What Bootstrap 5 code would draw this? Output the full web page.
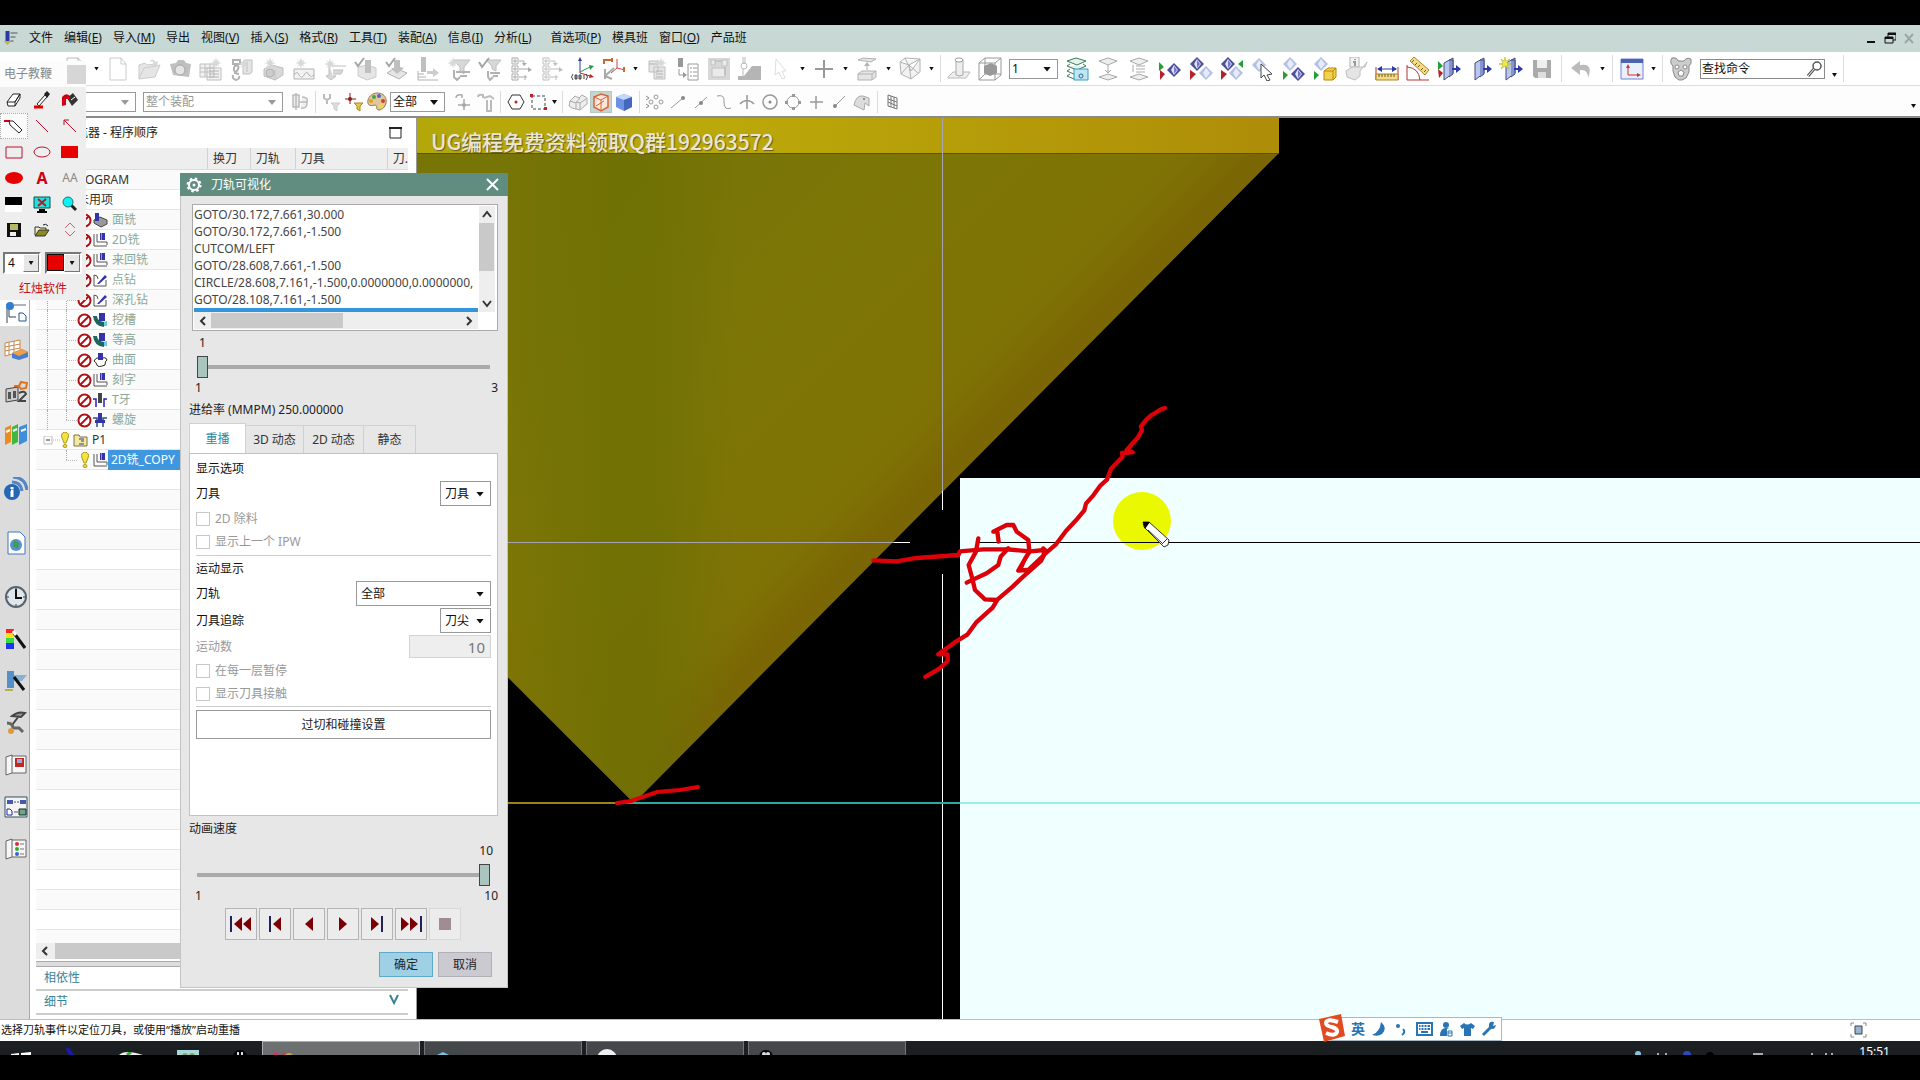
<!DOCTYPE html>
<html lang="zh-CN">
<head>
<meta charset="utf-8">
<meta name="viewport" content="width=device-width, initial-scale=1">
<title>刀轨可视化</title>
<link href="https://cdn.jsdelivr.net/npm/bootstrap@5.3.0/dist/css/bootstrap.min.css" rel="stylesheet">
<style>
body{background:#000;font:12px/16px "Noto Sans","Noto Sans CJK SC",sans-serif;color:#222;padding:25px 0;overflow:hidden}
svg{display:block;flex:none}
.btn{--bs-btn-padding-x:0;--bs-btn-padding-y:0;--bs-btn-font-size:12px;--bs-btn-border-radius:0;line-height:16px}
/* menus and toolbars */
.menubar{background:#c8d9d5;height:27px;gap:11px;padding:0 6px 2px 2px}
.menubar a{color:#111;text-decoration:none;white-space:nowrap}
.menubar .wide-gap{margin-left:8px}
.bar1{background:#fff;height:34px;gap:7px;padding-left:63px;border-bottom:1px solid #ddd}
.bar2{background:#fdfdfd;height:32px;gap:3px;padding:2px 0 0 10px;border-bottom:2px solid #8a8a8a}
.bar1 svg{width:24px;height:24px}
.bar2 svg{width:20px;height:20px}
.soft{opacity:.75}
.vsep{width:1px;align-self:stretch;background:#dcdcdc;margin:3px -1px}
.vsep.far{margin:3px 0}
.bar2 .vsep{margin:3px 2px}
.caret{width:5px;height:4px;background:#111;clip-path:polygon(0 0,100% 0,50% 100%);flex:none}
.on-tool{background:#c5d6d1;outline:1px solid #b4c8c2}
/* pull-down boxes */
.drop{position:relative;display:block;flex:none}
.drop::after{content:"";position:absolute;right:7px;top:50%;margin-top:-2px;width:8px;height:5px;background:#111;clip-path:polygon(0 0,100% 0,50% 100%);pointer-events:none}
.drop select{appearance:none;width:100%;height:25px;border:1px solid #999;background:#fff;padding:0 4px;font:inherit;color:#111;border-radius:0;display:block}
.drop.low select{height:20px;padding:0 2px}
.drop.dim::after{background:#999}.drop.dim select{color:#999;opacity:1}
.search-box{border:1px solid #8a8a8a;width:125px;height:20px}
.search-box input{border:0;outline:0;width:98px;padding:0 1px;font:inherit;color:#111}
.search-box input::placeholder{color:#111}
/* left side */
.side-icons{width:30px;background:#dcdcdc;border-right:1px solid #aaa;padding-top:181px}
.side-icons svg{width:24px;height:24px}
.side-icons .slot{height:42px;padding-left:4px;display:flex;align-items:center}
.side-icons .tab-on{height:27px;background:#fff;margin-bottom:4px}
.navi{width:387px;background:#fff;padding-left:6px;border-right:1px solid #999}
.navi-title{height:30px;padding:0 14px 0 4px}
.navi-head{height:22px;width:372px;background:#eee;color:#333;border-bottom:1px solid #ddd}
.navi-head span{border-left:1px solid #d2d2d2;padding-left:5px;line-height:21px}
.tree{width:372px;flex:1;min-height:0;overflow:hidden;margin:0;padding:0;list-style:none;background:repeating-linear-gradient(#fafafa 0 19px,#e6e6e6 19px 20px,#fff 20px 39px,#e6e6e6 39px 40px)}
.tree li{height:20px;display:flex;align-items:center;padding-left:11px;color:#8aa898}
.tree li.strong{color:#333}
.g1,.g2{width:19px;height:20px;border-left:1px dotted #aaa;flex:none}
.g2{width:11px;background:linear-gradient(90deg,#bbb 50%,transparent 0) 0 10px/2px 1px repeat-x}
.g2.end{border-left:0;position:relative}
.g2.end::before{content:"";position:absolute;height:10px;border-left:1px dotted #aaa}
.no-line{border-color:transparent}
.tree .picked{background:#3f97e0;color:#fff;align-self:stretch;padding:2px 3px;width:72px}
.tree .lbl{padding-left:4px}
.fold{height:24px;width:372px;border-bottom:2px solid #ccc;color:#3a8296;padding:3px 8px}
.thumb{background:#c9c9c9}
/* drawing palette */
.palette{left:0;top:61px;width:86px;height:239px;background:#eee;z-index:5}
.palette-title{height:26px;background:#fcfcfc;color:#888;padding-left:4px}
.palette-title i{width:19px;height:19px;background:#d6d6d6}
.palette-grid{display:grid;grid-template-columns:repeat(3,28px);grid-auto-rows:26px}
.palette-grid .btn{display:flex;align-items:center;justify-content:center}
.palette-grid .pressed{background:#fafafa;border:1px dotted #aaa}
.bevel{border:2px solid;border-color:#777 #fff #fff #777;background:#fff;height:22px}
.bevel b{width:16px;background:#e6e6e6;border:1px solid;border-color:#fff #777 #777 #fff}
.bevel select{appearance:none;border:0;background:none;width:18px;padding:0 3px;font:inherit;color:#111}
.swatch{width:17px;height:17px;background:#e60000;border:1px solid #111}
/* tool path dialog */
.dlg{left:180px;top:55px;width:328px;background:#e7e7e7;border:1px solid #c4c4c4;border-top:0;z-index:4}
.dlg-head{height:23px;background:#608d80;color:#fff;padding:0 9px 0 6px;margin:0 -1px}
.dlg-body{padding:8px 9px 10px 8px}
.codes{margin-left:3px;border:1px solid #aaa;background:#fff;padding:1px}
.codes ul{list-style:none;margin:0;padding:0;line-height:17px;white-space:nowrap;overflow:hidden;color:#444;border-bottom:4px solid #3494dc}
.codes .vbar{width:16px;background:#eee;height:106px;margin:0 1px 0 1px}
.codes .vbar .thumb{width:15px;height:48px}
.codes .hbar{height:17px;background:#eee;margin-right:18px}
.slide{appearance:none;display:block;width:293px;height:22px;margin:5px 0 2px 8px;background:linear-gradient(#aaa,#aaa) 0 50%/100% 4px no-repeat}
.slide::-webkit-slider-thumb{appearance:none;width:11px;height:22px;background:#a9c5bd;border:1px solid #444}
.ends{padding:0 0 0 6px}
.tabs .btn{height:28px;border:1px solid #d0d0d0;border-left:0;border-bottom:0;color:#333}
.tabs .btn.chosen{height:30px;background:#fff;color:#2a86a5;width:57px;border-left:1px solid #d0d0d0}
.panel{border:1px solid #c2c2c2;background:#fff;padding:7px 6px 76px;color:#111}
.panel hr{margin:5px 0;border-top:1px solid #ccc;opacity:1;color:#ccc}
.tick{display:flex;align-items:center;gap:5px;color:#999;height:16px}
.tick input{appearance:none;width:14px;height:14px;border:1px solid #c8c8c8;margin:0;background:#fff}
.count{width:82px;height:23px;background:#eee;border:1px solid #d2d2d2;text-align:right;padding:0 5px;color:#777;font-size:15px}
.wide-btn{width:100%;height:29px;border:1px solid #999!important;background:#fff;color:#222}
.play .btn{width:32px;height:32px;border:1px solid #b5b5b5;background:#ececec;display:flex;align-items:center;justify-content:center}
.ok,.cancel{width:54px;height:25px}
.dlg .ok{background:#9fd0e3;border:1px solid #5fa8c8}.dlg .cancel{background:#cacad0;border:1px solid #b0b0b6}
/* drawing area */
.scene{min-width:0;background:#000}
.scene svg{width:100%;height:100%}
.watermark{left:14px;top:9px;font:500 21px/28px "Noto Sans CJK SC",sans-serif;color:#e9e6d6;text-shadow:1px 1px 1px #665c20}
/* bottom */
.status{background:#fff;height:22px;border-top:1px solid #b5c0c0;color:#111;padding:0 53px 2px 1px}
.status .msg{font-size:11px}
.ime{left:1330px;bottom:0;width:172px;height:24px;background:#fff;border:1px solid #a9b7c5;padding-left:20px;gap:6px;color:#2874b4;z-index:3}
.ime svg.logo{position:absolute;left:-13px;top:-4px}
.task{height:14px;background:#1b1f22;overflow:hidden;align-items:flex-start!important}
.task .win{width:158px;height:30px;background:#44484b;border:1px solid #70767a;margin-right:4px;padding:12px 10px 0}
.task .win.front{background:#6c7070;border-color:#aab0b0}
.quick{width:262px;gap:34px;padding:11px 0 0 11px}
.clock{color:#fff;padding:3px 30px 0 0}
</style>
<script src="https://cdn.jsdelivr.net/npm/bootstrap@5.3.0/dist/js/bootstrap.bundle.min.js"></script>
</head>
<body class="d-flex flex-column vh-100 m-0">

<svg width="0" height="0" class="position-absolute" aria-hidden="true">
<defs>
<g id="star"><path d="M6 0l1 4 3-2-2 3 4 1-4 1 2 3-3-2-1 4-1-4-3 2 2-3-4-1 4-1-2-3 3 2z" fill="#ccc"/></g>
<g id="dia"><path d="M7 0l7 7-7 7-7-7z" fill="#4b4f9c"/><path d="M7 2l4 5-4 5-3-5z" fill="#dfe3fa"/><path d="M7 3v8l3-4z" fill="#7479c4"/></g>
<g id="dial"><path d="M7 0l7 7-7 7-7-7z" fill="#b4c0e4"/><path d="M7 2l4 5-4 5-3-5z" fill="#e6ecfc"/></g>
<symbol id="new" viewBox="0 0 24 24"><path d="M4 1h11l5 6v16H4zM15 1v6h5" fill="#fff" stroke="#bbb"/></symbol>
<symbol id="open" viewBox="0 0 24 24"><path d="M2 22V8l6-2 2 2 8-1v3M2 22l5-11 16-3-5 12z" fill="#ddd" stroke="#bbb"/><path d="M12 5q3-5 7 0l2-1-1 5-5-2 2-1q-2-3-5-1" fill="#ccc"/></symbol>
<symbol id="cam" viewBox="0 0 24 24"><path d="M2 7l6-1 2-3h6l2 3 5 1-2 13-16-2z" fill="#aaa"/><circle cx="12" cy="13" r="5" fill="#ddd" stroke="#888"/></symbol>
<symbol id="grid" viewBox="0 0 24 24"><path d="M1 7h14v13H1zM1 11h14M1 15h14M6 7v13M11 7v13M8 11h14v12H8z" fill="#eee" stroke="#aaa"/><path d="M10 14h10M10 17h10M10 20h10" stroke="#999"/><use href="#star" x="11"/></symbol>
<symbol id="tool" viewBox="0 0 24 24"><path d="M3 3h7v4H3zM4 8q6 0 4 4t-4 4M8 8q-5 1-4 5t5 4M3 18q-1 4 3 5 4-1 3-4" fill="none" stroke="#999" stroke-width="2"/><path d="M13 5l2-2h7v12l-2 2h-7zM17 5v10" fill="#ddd" stroke="#aaa"/><use href="#star" x="8" y="1"/></symbol>
<symbol id="box" viewBox="0 0 24 24"><path d="M3 12l8-4 11 3v7l-8 5-11-4z" fill="#ccc" stroke="#aaa"/><circle cx="9" cy="16" r="4" fill="#bbb" stroke="#999"/><path d="M14 13v10" stroke="#aaa"/><use href="#star" x="3"/></symbol>
<symbol id="wave" viewBox="0 0 24 24"><path d="M2 12h20v10H2zM2 18q3-5 5 0 3 4 5 0 3-5 5 0 2 3 5 0" fill="#eee" stroke="#999"/><use href="#star" x="3"/></symbol>
<symbol id="feed" viewBox="0 0 24 24"><path d="M9 9h14M10 13h10l-2 4H10M6 8v10l-3 1 5 4 5-4h-3" fill="#ccc" stroke="#aaa"/><use href="#star" x="1" y="1"/></symbol>
<symbol id="ver" viewBox="0 0 24 24"><path d="M4 10l9-2 9 3v9l-9 3-9-4z" fill="#ddd" stroke="#bbb"/><path d="M11 3h6v13h-6z" fill="#aaa"/><path d="M1 5l3 4 6-8" stroke="#888" fill="none" stroke-width="2"/></symbol>
<symbol id="ver2" viewBox="0 0 24 24"><path d="M2 16l8-5 12 5-8 6z" fill="#ddd" stroke="#999"/><path d="M9 3h6v7l4 1-7 6-6-6h3z" fill="#aaa"/><path d="M1 5l3 4 6-8" stroke="#888" fill="none" stroke-width="2"/></symbol>
<symbol id="post" viewBox="0 0 24 24"><path d="M5 0h5v15H5z" fill="#aaa"/><path d="M2 17h6M2 14v9h20M2 20h8" stroke="#999" fill="none"/><path d="M11 14h6v-3l6 5-6 4v-3h-6z" fill="#bbb"/></symbol>
<symbol id="fil" viewBox="0 0 24 24"><path d="M6 3h17l-6 7v7l-4-3v-4z" fill="#ccc" stroke="#aaa"/><path d="M7 13v7l3 3 3-3M9 15h14M13 19h7" fill="none" stroke="#999" stroke-width="2"/><use href="#star"/></symbol>
<symbol id="filc" viewBox="0 0 24 24"><path d="M8 3h15l-5 6v5l-4-2V9z" fill="#ccc" stroke="#aaa"/><path d="M10 14v6l2 3 3-3M12 16h10M15 19h5" fill="none" stroke="#999" stroke-width="2"/><path d="M1 5l3 5 7-9" stroke="#888" fill="none" stroke-width="2"/></symbol>
<symbol id="exp" viewBox="0 0 24 24"><path d="M3 1h6v6H3zM3 9h6v6H3zM3 17h6v6H3zM4 4h4M4 12h4M4 20h4M6 2v4M6 10v4M6 18v4M10 4h5v3M10 12h9M10 20h8M16 18v5" fill="none" stroke="#aaa"/><path d="M13 6h5l-3 3zM19 10l4 3-4 2z" fill="#aaa"/></symbol>
<symbol id="csys" viewBox="0 0 24 24"><path d="M9 16V3" stroke="#333c9c"/><path d="M7 4h4L9 0z" fill="#333c9c"/><path d="M9 15l10-5" stroke="#2a9a40"/><path d="M18 8l5 1-4 4z" fill="#2a9a40"/><path d="M9 16l10 3" stroke="#b22"/><path d="M19 17l4 3-5 1z" fill="#b22"/><path d="M2 17q-3 3 0 6M5 18v4M9 18v4M13 18v4M15 17q3 3 0 6M4 18h2v4H4zM8 18h2v4H8z" stroke="#444" fill="none"/></symbol>
<symbol id="csys2" viewBox="0 0 24 24"><path d="M3 22V12M3 19l7 3M3 19l9-8" stroke="#aaa" fill="none" stroke-width="2"/><path d="M15 11V2M15 11l8 2M15 11l-6 5" stroke="#c44"/><path d="M2 7V3h8M10 1v4M22 10v5" stroke="#c63" fill="none" stroke-width="2"/></symbol>
<symbol id="pages" viewBox="0 0 24 24"><path d="M4 4h9v11H4zM9 10h11v12H9z" fill="#ddd" stroke="#aaa"/><path d="M11 14h7M11 17h7M11 20h7M4 7h8" stroke="#999"/><use href="#star" x="10"/></symbol>
<symbol id="list" viewBox="0 0 24 24"><path d="M2 1h5v9H2z" fill="#999"/><path d="M3 12v6h5M12 7h10v16H12zM14 11h2M17 11h4M14 15h2M17 15h4M14 19h2M17 19h4" fill="none" stroke="#999"/><path d="M7 15l4 3-4 3z" fill="#999"/></symbol>
<symbol id="shop" viewBox="0 0 24 24"><path d="M1 1h22v22H1z" fill="#ccc"/><path d="M4 3h4v5H4zM15 3h5v6h-5zM5 11h13v9H5z" fill="#e4e4e4" stroke="#aaa"/><path d="M8 4h7M18 10v8" stroke="#999"/></symbol>
<symbol id="ramp" viewBox="0 0 24 24"><path d="M0 23V19h6L14 9h9v14z" fill="#b5b5b5"/><circle cx="6" cy="9" r="3" fill="#fff" stroke="#bbb"/><path d="M5 0v6h2V0M5 12v8" stroke="#bbb" fill="none"/></symbol>
<symbol id="ptr" viewBox="0 0 24 24"><path d="M7 2l10 12h-4l3 7-3 1-3-7-4 3z" fill="#fff" stroke="#ddd"/></symbol>
<symbol id="plus" viewBox="0 0 24 24"><path d="M12 3v18M3 12h18" stroke="#999" stroke-width="2"/></symbol>
<symbol id="ext" viewBox="0 0 24 24"><path d="M3 3l5-2 13 1-5 3zM3 17l4-3h14v6l-4 3H3zM3 17h14v6M17 17l4-3M12 13V7" fill="#ddd" stroke="#999"/><path d="M9 9h6l-3-4z" fill="#999"/></symbol>
<symbol id="wire" viewBox="0 0 24 24"><path d="M2 5l9 3 11-6v13l-9 7-10-5zM11 8l2 14M2 5l5-4 15 1M7 1l6 13 9-12M3 17l8-9 9 8" fill="#eee" stroke="#999"/></symbol>
<symbol id="pole" viewBox="0 0 24 24"><path d="M1 20l5-5h17l-4 6H1z" fill="#eee" stroke="#bbb"/><path d="M9 3v15q3 2 7 0V3" fill="#eee" stroke="#aaa"/><ellipse cx="12" cy="3" rx="4" ry="2" fill="#fff" stroke="#999"/></symbol>
<symbol id="cubein" viewBox="0 0 24 24"><path d="M1 6l6-5h16v17l-6 5H1zM1 6h16v17M17 6l6-5M7 1v16h16M7 17l-6 6" fill="none" stroke="#999"/><path d="M6 9l7-3 6 3v7l-7 3-6-3z" fill="#999"/></symbol>
<symbol id="lay" viewBox="0 0 24 24"><path d="M2 4l9-3 10 3-9 4zM2 9l10 4 9-4M2 14l9 4M2 19l7 3M2 9l3-2M21 9l-3-2M2 14l3-2M2 19l3-2" fill="#e4f2ea" stroke="#3d7a5c"/><path d="M9 12h14v11H9z" fill="#bfe6f5" stroke="#3a9cc0"/><circle cx="16" cy="19" r="2" fill="none" stroke="#2a6a90"/></symbol>
<symbol id="laym" viewBox="0 0 24 24"><path d="M3 4l9-3 9 3-9 4zM3 20l9-3 9 3-9 3zM12 8v8M9 13l3 3 3-3" fill="#eee" stroke="#aaa"/></symbol>
<symbol id="layc" viewBox="0 0 24 24"><path d="M3 4l9-3 9 3-9 4zM3 20l9-3 9 3-9 3z" fill="#eee" stroke="#aaa"/><path d="M9 9h9M9 12h9M9 15h9M6 8v7" stroke="#aaa"/></symbol>
<symbol id="d1" viewBox="0 0 24 24"><path d="M1 5l5 5-5 4z" fill="#22a033"/><path d="M2 13l5 4-5 6z" fill="#b8202a"/><use href="#dia" x="9" y="6"/></symbol>
<symbol id="d2" viewBox="0 0 24 24"><use href="#dia" x="1" y="0"/><path d="M1 13l6 4-6 6z" fill="#b8202a"/><use href="#dial" x="10" y="9"/></symbol>
<symbol id="d3" viewBox="0 0 24 24"><use href="#dia" x="1" y="0"/><path d="M1 13l6 4-6 6z" fill="#b8202a"/><path d="M23 3v8l-5-4z" fill="#22a033"/><use href="#dial" x="9" y="9"/></symbol>
<symbol id="d4" viewBox="0 0 24 24"><use href="#dial" x="1" y="1"/><path d="M10 7l11 10-5 1 3 5-3 1-3-6-3 3z" fill="#fff" stroke="#444"/></symbol>
<symbol id="d5" viewBox="0 0 24 24"><use href="#dial" x="1" y="0"/><path d="M1 14l5 4-5 5z" fill="#22a033"/><use href="#dia" x="9" y="10"/></symbol>
<symbol id="d6" viewBox="0 0 24 24"><use href="#dial" x="1" y="0"/><path d="M1 14l5 4-5 5z" fill="#22a033"/><path d="M11 14l4-3h8v9l-3 3h-9zM11 14h9v9M20 14l3-3" fill="#f2d24c" stroke="#b8860b"/></symbol>
<symbol id="info" viewBox="0 0 24 24"><path d="M6 0h9v10H6z" fill="#eee" stroke="#999"/><path d="M11 2v1M9 5h2v4" stroke="#777" fill="none" stroke-width="2"/><path d="M2 14l6-4h13l2-5-7 9v5l-5 4-8-3z" fill="#ddd" stroke="#aaa"/></symbol>
<symbol id="rule" viewBox="0 0 24 24"><path d="M1 10v13M23 10v13" stroke="#b33"/><path d="M3 12h18" stroke="#2b3aa8"/><path d="M2 12l5-3v6zM22 12l-5-3v6z" fill="#2b3aa8"/><path d="M1 17h22v6H1z" fill="#f2dc8c" stroke="#a8852a"/><path d="M4 17v3M7 17v3M10 17v3M13 17v3M16 17v3M19 17v3" stroke="#775a10"/></symbol>
<symbol id="ang" viewBox="0 0 24 24"><path d="M1 8v15h22M1 10q12 1 13 13" fill="none" stroke="#b33"/><path d="M4 4l4-4 15 13-4 5z" fill="#f2dc8c" stroke="#a8852a"/><path d="M8 3l-2 2M11 6l-2 2M14 8l-2 2M17 11l-2 2M20 13l-2 2" stroke="#775a10"/></symbol>
<g id="plate"><path d="M7 6l9-5v15l-9 7z" fill="#b9c7ee" stroke="#454d7a"/><path d="M12 3h4v14l-4 3" fill="#8695d2" stroke="#454d7a"/><path d="M15 12h6" stroke="#2b3aa8" stroke-width="2"/><path d="M19 8l5 4-5 4z" fill="#2b3aa8"/></g>
<symbol id="pl1" viewBox="0 0 24 24"><path d="M1 4l5 5-5 4z" fill="#22a033"/><path d="M1 12l5 4-4 5z" fill="#b8202a"/><use href="#plate"/></symbol>
<symbol id="pl2" viewBox="0 0 24 24"><use href="#plate"/></symbol>
<symbol id="pl3" viewBox="0 0 24 24"><use href="#plate"/><path d="M6 0l1 4 4-2-3 4 4 1-4 1 2 4-4-3-4 3 2-4-4-1 4-1-2-4 3 2z" fill="#e6ea4c" stroke="#a8a020" stroke-width=".5"/></symbol>
<symbol id="save" viewBox="0 0 24 24"><path d="M3 3h18v18H5l-2-2z" fill="#aaa"/><path d="M7 3h10v8H7z" fill="#eee"/><path d="M8 15h8v6H8z" fill="#ddd"/></symbol>
<symbol id="undo" viewBox="0 0 24 24"><path d="M2 11l9-7v4q14-2 8 13 0-9-8-8v5z" fill="#bbb"/></symbol>
<symbol id="orient" viewBox="0 0 24 24"><path d="M1 2h22v20H1z" fill="#e9f0fb" stroke="#6f82cf"/><path d="M1 2h22v4H1z" fill="#4c62b4"/><path d="M8 18V9M8 18h10" stroke="#c33" fill="none"/><path d="M6 11h4L8 7zM17 16l4 2-4 2z" fill="#c33"/></symbol>
<symbol id="bear" viewBox="0 0 24 24"><path d="M3 1q5-1 6 3h6q2-4 7-2 1 5-2 7v6l-3 6-4 2h-3l-4-3-2-6V9Q0 5 3 1z" fill="#ccc" stroke="#888"/><circle cx="8" cy="10" r="2" fill="#fff" stroke="#888"/><circle cx="16" cy="10" r="2" fill="#fff" stroke="#888"/><path d="M9 15l3-2 3 2-1 4h-4z" fill="#fff" stroke="#888"/></symbol>
<symbol id="sm1" viewBox="0 0 20 20"><path d="M3 3h6v12H3zM6 1v17M12 5q7 0 5 6 0 6-6 5M9 10h8" fill="#eee" stroke="#bbb" stroke-width="1.500"/></symbol>
<symbol id="sm2" viewBox="0 0 20 20"><path d="M3 2v4l3 2 3-2V2M6 8v4" fill="none" stroke="#bbb" stroke-width="2"/><path d="M10 11h9l-3 3v5l-3-2v-3z" fill="#ddd" stroke="#ccc"/></symbol>
<symbol id="sm3" viewBox="0 0 20 20"><path d="M6 1v11M1 7h11" stroke="#8b1a1a"/><circle cx="6" cy="7" r="2" fill="#8b1a1a"/><path d="M10 11h9l-3 3v5l-3-2v-3z" fill="#e8c840" stroke="#a8882a"/></symbol>
<symbol id="pal" viewBox="0 0 20 20"><path d="M10 1c13 0 11 16 2 17-4 0-1-5-4-5-6 2-8-1-7-5 1-4 5-7 9-7z" fill="#e0c89a" stroke="#987a4a"/><circle cx="7" cy="5" r="2" fill="#48a048"/><circle cx="12" cy="4" r="2" fill="#4a6ad0"/><circle cx="16" cy="9" r="2" fill="#d04040"/><circle cx="4" cy="9" r="2" fill="#e0a030"/><circle cx="14" cy="14" r="2" fill="#e8e040"/></symbol>
<symbol id="sm4" viewBox="0 0 20 20"><path d="M4 6q0-4 6-3v3M12 7v11M6 13h12" fill="none" stroke="#aaa" stroke-width="1.500"/><circle cx="12" cy="13" r="2" fill="#aaa"/></symbol>
<symbol id="sm5" viewBox="0 0 20 20"><path d="M3 5q0-3 5-2v3M9 6l6-2 4 3M12 8v11h4V8" fill="none" stroke="#bbb" stroke-width="2"/></symbol>
<symbol id="hex" viewBox="0 0 20 20"><path d="M6 3h8l4 7-4 7H6l-4-7z" fill="#fff" stroke="#333"/><circle cx="10" cy="10" r="1.500" fill="#b22"/></symbol>
<symbol id="marq" viewBox="0 0 20 20"><path d="M3 4h13v13H3z" fill="none" stroke="#444" stroke-dasharray="3 2"/><path d="M1 2h3v3H1zM15 15h3v3h-3z" fill="#b22"/></symbol>
<symbol id="cub1" viewBox="0 0 20 20"><path d="M2 9l5-5 4 2 3-3 5 3v6l-7 6-8-2-3-2zM2 9l6 2v6M8 11l4-5M12 18v-7l6-4M12 11l-4-1" fill="#eee" stroke="#aaa"/></symbol>
<symbol id="cub2" viewBox="0 0 20 20"><path d="M3 5l7-3 7 2v11l-7 4-7-4z" fill="#fde9dc" stroke="#d9643a" stroke-width="1.500"/><path d="M3 5l7 3 7-4M10 8v11M5 14l8-5" fill="none" stroke="#d9643a"/></symbol>
<symbol id="cub3" viewBox="0 0 20 20"><path d="M2 5l8-3 8 3v10l-8 4-8-4z" fill="#6d92e4"/><path d="M2 5l8-3 8 3-8 3z" fill="#c4d7fa"/><path d="M10 8l8-3v10l-8 4z" fill="#4468c0"/></symbol>
<symbol id="snap" viewBox="0 0 20 20"><g fill="none" stroke="#999"><circle cx="11" cy="5" r="2"/><circle cx="11" cy="15" r="2"/><circle cx="6" cy="10" r="2"/><circle cx="16" cy="10" r="2"/></g><path d="M1 4l3 2-3 2M1 12l3 2-3 2" fill="none" stroke="#888"/></symbol>
<symbol id="s1" viewBox="0 0 20 20"><path d="M3 16L15 6" stroke="#999"/><circle cx="15" cy="6" r="2" fill="#888"/></symbol>
<symbol id="s2" viewBox="0 0 20 20"><path d="M4 16L16 5" stroke="#999"/><circle cx="10" cy="11" r="2" fill="#888"/></symbol>
<symbol id="s3" viewBox="0 0 20 20"><path d="M3 4q8-2 7 6 0 9 7 6" fill="none" stroke="#999"/></symbol>
<symbol id="s4" viewBox="0 0 20 20"><path d="M3 12q7-7 14 0M10 3v14" fill="none" stroke="#999" stroke-width="1.500"/></symbol>
<symbol id="s5" viewBox="0 0 20 20"><circle cx="10" cy="10" r="7" fill="none" stroke="#999" stroke-width="1.500"/><circle cx="10" cy="10" r="1.500" fill="#888"/></symbol>
<symbol id="s6" viewBox="0 0 20 20"><circle cx="10" cy="10" r="6" fill="none" stroke="#999"/><path d="M9 2h3v3H9zM9 15h3v3H9zM2 9h3v3H2zM15 9h3v3h-3z" fill="#999"/></symbol>
<symbol id="s7" viewBox="0 0 20 20"><path d="M10 4v13M4 10h13" stroke="#999" stroke-width="1.500"/></symbol>
<symbol id="s8" viewBox="0 0 20 20"><path d="M5 15L16 4" stroke="#999"/><circle cx="6" cy="14" r="2" fill="#888"/></symbol>
<symbol id="s9" viewBox="0 0 20 20"><path d="M2 13q2-10 9-9l6 2v8l-4-3-1 7z" fill="#ddd" stroke="#aaa"/><circle cx="12" cy="7" r="1" fill="#777"/></symbol>
<symbol id="s10" viewBox="0 0 20 20"><path d="M5 3l9 3v11l-9-3zM8 4v11M11 5v11M5 7l9 3M5 10l9 4" fill="none" stroke="#777"/></symbol>
<symbol id="ban" viewBox="0 0 15 15"><circle cx="7.500" cy="7.500" r="6" fill="#fff" stroke="#b20f14" stroke-width="2"/><path d="M3 12l9-9" stroke="#b20f14" stroke-width="2"/></symbol>
<symbol id="op" viewBox="0 0 16 16"><path d="M2 2v12h13M5 2v8h10v3" fill="none" stroke="#555"/><path d="M8 1h5v7H8z" fill="#3434a8"/><path d="M9 1h1v7H9z" fill="#8c8ce0"/></symbol>
<symbol id="opface" viewBox="0 0 16 16"><path d="M2 8l6-3 7 3v4l-6 3-7-4z" fill="#999" stroke="#444"/><path d="M3 1h4v8H3z" fill="#3434a8"/></symbol>
<symbol id="opdr" viewBox="0 0 16 16"><path d="M2 3v11h12V8M2 3q4 0 4 4" fill="none" stroke="#555"/><path d="M5 12l8-9 2 2-8 7z" fill="#3434a8"/></symbol>
<symbol id="oppock" viewBox="0 0 16 16"><path d="M1 4q1 10 11 11V10Q5 9 5 4z" fill="#1e6660"/><path d="M7 1h6v8H7z" fill="#3434a8"/><path d="M12 10l3-1v5h-3z" fill="#60d0e0"/></symbol>
<symbol id="oparea" viewBox="0 0 16 16"><path d="M2 9q3-5 6-2 6-3 7 1-2 1-2 5-7 3-8 0-1-3-3-4z" fill="#fff" stroke="#222"/><path d="M6 1h5v7H6z" fill="#3434a8"/></symbol>
<symbol id="opth" viewBox="0 0 16 16"><path d="M1 7h3v8M15 7h-3v8" fill="none" stroke="#2020c0" stroke-width="1.500"/><path d="M6 1h4v10H6z" fill="#444"/></symbol>
<symbol id="opsp" viewBox="0 0 16 16"><path d="M1 6h4v9M15 6h-4v9" fill="none" stroke="#257" stroke-width="1.500"/><path d="M6 1h4v7H6zM3 8h10v3H3z" fill="#3434a8"/></symbol>
<symbol id="bulb" viewBox="0 0 8 16"><path d="M4 0q5 1 3 6L5 11H3L1 6Q-1 1 4 0z" fill="#f4e33a" stroke="#a89a20"/><ellipse cx="4" cy="14" rx="2" ry="1.500" fill="#f4e33a" stroke="#a89a20"/></symbol>
</defs>
</svg>

<nav class="menubar d-flex align-items-center flex-shrink-0">
<svg width="16" height="16" viewBox="0 0 15 16"><path d="M3 1h4v10H3z" fill="#2a3aa0"/><path d="M1 11h8l-4 4z" fill="#c7b23c"/><path d="M8 3h7M8 7h5M8 11h3" stroke="#555"/></svg>
<a href="#">文件</a><a href="#">编辑(<u>E</u>)</a><a href="#">导入(<u>M</u>)</a><a href="#">导出</a><a href="#">视图(<u>V</u>)</a><a href="#">插入(<u>S</u>)</a><a href="#">格式(<u>R</u>)</a><a href="#">工具(<u>T</u>)</a><a href="#">装配(<u>A</u>)</a><a href="#">信息(<u>I</u>)</a><a href="#">分析(<u>L</u>)</a><a href="#" class="wide-gap">首选项(<u>P</u>)</a><a href="#">模具班</a><a href="#">窗口(<u>O</u>)</a><a href="#">产品班</a>
<div class="ms-auto d-flex gap-2 align-items-center">
<button class="btn border-0" aria-label="最小化"><svg width="10" height="12"><path d="M1 10h8" stroke="#111" stroke-width="2"/></svg></button>
<button class="btn border-0" aria-label="还原"><svg width="12" height="12" fill="none" stroke="#111"><path d="M4 5V1h8v7H9" /><path d="M4 2h8M1 6h8" stroke-width="2"/><path d="M1 5h8v6H1z"/></svg></button>
<button class="btn border-0" aria-label="关闭"><svg width="10" height="12"><path d="M1 2l8 9M9 2l-8 9" stroke="#9aa8a4" stroke-width="2"/></svg></button>
</div>
</nav>

<div class="bar1 d-flex align-items-center flex-shrink-0">
<svg><use href="#new"/></svg><i class="caret"></i>
<svg class="soft"><use href="#new"/></svg><svg class="soft"><use href="#open"/></svg><svg class="soft"><use href="#cam"/></svg><svg class="soft"><use href="#grid"/></svg><svg class="soft"><use href="#tool"/></svg><svg class="soft"><use href="#box"/></svg><svg class="soft"><use href="#wave"/></svg><svg class="soft"><use href="#feed"/></svg><svg class="soft"><use href="#ver"/></svg><svg class="soft"><use href="#ver2"/></svg><svg class="soft"><use href="#post"/></svg><svg class="soft"><use href="#fil"/></svg><svg class="soft"><use href="#filc"/></svg><svg><use href="#exp"/></svg><svg class="soft"><use href="#exp"/></svg><svg><use href="#csys"/></svg><svg><use href="#csys2"/></svg><i class="caret"></i>
<svg class="soft"><use href="#pages"/></svg><svg><use href="#list"/></svg><svg class="soft"><use href="#shop"/></svg><svg><use href="#ramp"/></svg><svg><use href="#ptr"/></svg><i class="caret"></i>
<svg><use href="#plus"/></svg><i class="caret"></i><svg class="soft"><use href="#ext"/></svg><i class="caret"></i><svg class="soft"><use href="#wire"/></svg><i class="caret"></i>
<i class="vsep"></i><svg><use href="#pole"/></svg><svg><use href="#cubein"/></svg>
<span class="drop low" style="width:49px"><select aria-label="工作层"><option>1</option></select></span>
<svg><use href="#lay"/></svg><svg><use href="#laym"/></svg><svg><use href="#layc"/></svg><svg><use href="#d1"/></svg><svg><use href="#d2"/></svg><svg><use href="#d3"/></svg><svg><use href="#d4"/></svg><svg><use href="#d5"/></svg><svg><use href="#d6"/></svg><svg class="soft"><use href="#info"/></svg><svg><use href="#rule"/></svg><svg><use href="#ang"/></svg><svg><use href="#pl1"/></svg><svg><use href="#pl2"/></svg><svg><use href="#pl3"/></svg><svg><use href="#save"/></svg>
<i class="vsep far"></i><svg><use href="#undo"/></svg><i class="caret"></i><i class="vsep far"></i><svg><use href="#orient"/></svg><i class="caret"></i><i class="vsep"></i><svg><use href="#bear"/></svg>
<div class="search-box d-flex align-items-center justify-content-between"><input type="text" aria-label="查找命令" placeholder="查找命令"><svg style="width:18px;height:18px" viewBox="0 0 18 18"><circle cx="11" cy="6" r="4" fill="#fff" stroke="#555" stroke-width="1.500"/><path d="M8 9l-6 7" stroke="#555" stroke-width="3"/><path d="M8 9l-6 7" stroke="#fff"/></svg></div>
<i class="caret align-self-end mb-2"></i><i class="vsep"></i>
</div>

<div class="bar2 d-flex align-items-center flex-shrink-0">
<span class="drop low dim" style="width:126px"><select aria-label="类型过滤器" disabled><option></option></select></span>
<span class="drop low dim ms-1" style="width:140px"><select aria-label="选择范围" disabled><option>整个装配</option></select></span>
<svg class="ms-1"><use href="#sm1"/></svg><i class="vsep"></i><svg><use href="#sm2"/></svg><svg><use href="#sm3"/></svg><svg><use href="#pal"/></svg>
<span class="drop low" style="width:55px"><select aria-label="过滤"><option>全部</option></select></span>
<svg class="ms-1"><use href="#sm4"/></svg><svg><use href="#sm5"/></svg><i class="vsep"></i><svg><use href="#hex"/></svg><svg><use href="#marq"/></svg><i class="caret"></i><i class="vsep"></i>
<svg><use href="#cub1"/></svg><svg class="on-tool"><use href="#cub2"/></svg><svg><use href="#cub3"/></svg><i class="vsep"></i>
<svg><use href="#snap"/></svg><svg><use href="#s1"/></svg><svg><use href="#s2"/></svg><svg><use href="#s3"/></svg><svg><use href="#s4"/></svg><svg><use href="#s5"/></svg><svg><use href="#s6"/></svg><svg><use href="#s7"/></svg><svg><use href="#s8"/></svg><svg><use href="#s9"/></svg><i class="vsep"></i><svg><use href="#s10"/></svg>
<i class="caret ms-auto me-1 align-self-end mb-2"></i>
</div>

<main class="d-flex flex-grow-1 position-relative" style="min-height:0">
<aside class="side-icons flex-shrink-0">
<div class="slot tab-on"><svg viewBox="0 0 24 24"><path d="M3 3v19M5 8v8h7" stroke="#345" fill="none"/><circle cx="6" cy="5" r="4" fill="#2f7fd0"/><path d="M10 4h12" stroke="#667"/><path d="M15 12h4l3 3v5h-7z" fill="#fff" stroke="#258"/></svg></div>
<div class="slot"><svg viewBox="0 0 24 24"><path d="M1 4l15-3v12L1 17zM1 8l15-3M1 12l15-3M5 3v13M10 2v13" fill="#fff" stroke="#c8884a"/><path d="M8 14l10-4 6 3v5l-9 3-7-2z" fill="#4a7cd0"/><path d="M8 14l10-4 6 3-9 4z" fill="#f0a040"/></svg></div>
<div class="slot"><svg viewBox="0 0 24 24"><path d="M2 8l12-2v13L2 21z" fill="#ccc" stroke="#444"/><path d="M4 11h3v7H4zM9 10h3v7H9z" fill="#555"/><path d="M10 5h5l2-4 6 1-1 5-5 1-2-3" fill="none" stroke="#e07020" stroke-width="2"/><path d="M15 12q6-3 7 1l-7 7h7" stroke="#444" fill="none" stroke-width="2"/></svg></div>
<div class="slot"><svg viewBox="0 0 24 24"><path d="M1 5l6-3v17l-6 3z" fill="#ee8a22"/><path d="M8 4l6-3v18l-6 3z" fill="#40b840"/><path d="M15 4l8-3v17l-8 4z" fill="#3c8fd8"/><path d="M2 9l4-2M9 8l4-2M17 8l5-2" stroke="#fff" stroke-width="2"/></svg></div>
<div class="slot" style="height:66px"><svg viewBox="0 0 24 24"><circle cx="8" cy="15" r="8" fill="#2467b4"/><path d="M8 10v2M7 14h1v6" stroke="#fff" stroke-width="3"/><path d="M8 5q9 0 10 9M9 0q13 1 14 13" fill="none" stroke="#5585c4" stroke-width="3"/></svg></div>
<div class="slot"><svg viewBox="0 0 24 24"><path d="M4 1h12l5 5v17H4z" fill="#fff" stroke="#3b78c0"/><circle cx="12" cy="14" r="6" fill="#5a8fd0"/><path d="M10 9l5 3-1 6-5-3z" fill="#38a050"/></svg></div>
<div class="slot" style="height:66px"><svg viewBox="0 0 24 24"><circle cx="12" cy="12" r="10" fill="#dfe6ec" stroke="#59636c" stroke-width="2"/><path d="M12 4v9h6" fill="none" stroke="#111" stroke-width="2"/><path d="M12 3v2M12 19v2M3 12h2M19 12h2" stroke="#334"/></svg></div>
<div class="slot" style="height:18px"><svg viewBox="0 0 24 24"><path d="M2 2h8v4H2z" fill="#f22"/><path d="M2 6h8v5H2z" fill="#fd2"/><path d="M2 11h8v5H2z" fill="#3d4"/><path d="M2 16h8v6H2z" fill="#23e"/><path d="M10 6l11 15" stroke="#111" stroke-width="3"/><path d="M9 4l3 4" stroke="#fff" stroke-width="3"/></svg></div>
<div class="slot" style="height:66px"><svg viewBox="0 0 24 24"><path d="M3 2h7v17H3z" fill="#5590c8"/><path d="M10 6h13l-5 6h-8z" fill="#8ab0d4"/><path d="M10 8l10 13" stroke="#111" stroke-width="3"/><path d="M1 21h8" stroke="#b6b04a" stroke-width="2"/></svg></div>
<div class="slot" style="height:18px"><svg viewBox="0 0 24 24"><path d="M8 5q6-5 13-3l-4 4zM15 5L8 14" stroke="#444" fill="#999" stroke-width="2"/><path d="M3 12q6 0 6 5h6l4 4" fill="none" stroke="#666" stroke-width="3"/><circle cx="7" cy="20" r="3" fill="#e09a3c"/></svg></div>
<div class="slot" style="height:66px"><svg viewBox="0 0 24 24"><path d="M2 4l6-2v18l-6 2zM8 3h14v17H8" fill="#f6f6f6" stroke="#666"/><path d="M11 5h9v9h-9z" fill="#c02a22"/><path d="M13 6h5v4h-5z" fill="#9ad"/></svg></div>
<div class="slot" style="height:18px"><svg viewBox="0 0 24 24"><path d="M1 2h22v20H1z" fill="#f4f4f4" stroke="#2d5560"/><path d="M3 5h6v4H3zM16 5h6v4h-6z" fill="#4858b0"/><path d="M10 7h2M13 7h2M10 17h4" stroke="#555"/><path d="M3 14h3l2 2v4H3z" fill="#fff" stroke="#22a"/><path d="M15 14h7v6h-7z" fill="#6a8" stroke="#222"/></svg></div>
<div class="slot" style="height:66px"><svg viewBox="0 0 24 24"><path d="M2 4l6-2v18l-6 2zM8 3h14v17H8" fill="#f6f6f6" stroke="#666"/><circle cx="13" cy="7" r="2" fill="#c33"/><circle cx="13" cy="12" r="2" fill="#3a3"/><circle cx="13" cy="17" r="2" fill="#36c"/><path d="M16 7h4M16 12h4M16 17h4" stroke="#777"/></svg></div>
</aside>

<section class="navi d-flex flex-column flex-shrink-0">
<div class="navi-title d-flex align-items-center justify-content-between flex-shrink-0"><span>工序导航器 - 程序顺序</span><svg width="13" height="12"><path d="M1 1h11v10H1z" fill="none" stroke="#222"/><path d="M0 1h13" stroke="#222" stroke-width="2"/></svg></div>
<div class="navi-head d-flex flex-shrink-0"><span class="border-0" style="width:171px"></span><span style="width:43px">换刀</span><span style="width:45px">刀轨</span><span style="width:92px">刀具</span><span>刀.</span></div>
<ul class="tree">
<li class="strong"><i class="g1 no-line"></i><i class="g1 no-line"></i><span>OGRAM</span></li>
<li class="strong"><i class="g1"></i><i class="g2"></i><span>未用项</span></li>
<li><i class="g1"></i><i class="g2"></i><svg width="15" height="15"><use href="#ban"/></svg><svg width="16" height="16"><use href="#opface"/></svg><span class="lbl">面铣</span></li>
<li><i class="g1"></i><i class="g2"></i><svg width="15" height="15"><use href="#ban"/></svg><svg width="16" height="16"><use href="#op"/></svg><span class="lbl">2D铣</span></li>
<li><i class="g1"></i><i class="g2"></i><svg width="15" height="15"><use href="#ban"/></svg><svg width="16" height="16"><use href="#op"/></svg><span class="lbl">来回铣</span></li>
<li><i class="g1"></i><i class="g2"></i><svg width="15" height="15"><use href="#ban"/></svg><svg width="16" height="16"><use href="#opdr"/></svg><span class="lbl">点钻</span></li>
<li><i class="g1"></i><i class="g2"></i><svg width="15" height="15"><use href="#ban"/></svg><svg width="16" height="16"><use href="#opdr"/></svg><span class="lbl">深孔钻</span></li>
<li><i class="g1"></i><i class="g2"></i><svg width="15" height="15"><use href="#ban"/></svg><svg width="16" height="16"><use href="#oppock"/></svg><span class="lbl">挖槽</span></li>
<li><i class="g1"></i><i class="g2"></i><svg width="15" height="15"><use href="#ban"/></svg><svg width="16" height="16"><use href="#oppock"/></svg><span class="lbl">等高</span></li>
<li><i class="g1"></i><i class="g2"></i><svg width="15" height="15"><use href="#ban"/></svg><svg width="16" height="16"><use href="#oparea"/></svg><span class="lbl">曲面</span></li>
<li><i class="g1"></i><i class="g2"></i><svg width="15" height="15"><use href="#ban"/></svg><svg width="16" height="16"><use href="#op"/></svg><span class="lbl">刻字</span></li>
<li><i class="g1"></i><i class="g2"></i><svg width="15" height="15"><use href="#ban"/></svg><svg width="16" height="16"><use href="#opth"/></svg><span class="lbl">T牙</span></li>
<li><i class="g1"></i><i class="g2 end"></i><svg width="15" height="15"><use href="#ban"/></svg><svg width="16" height="16"><use href="#opsp"/></svg><span class="lbl">螺旋</span></li>
<li class="strong" style="padding-left:7px"><svg width="18" height="9"><path d="M1 0h8v8H1z" fill="#fff" stroke="#bbb"/><path d="M3 4h4" stroke="#333"/><path d="M10 4h8" stroke="#bbb" stroke-dasharray="1 1"/></svg><svg width="8" height="16"><use href="#bulb"/></svg><svg width="15" height="14" class="ms-1"><path d="M1 2h5l1 2h7v9H1z" fill="#f4e9a0" stroke="#7a7340"/><path d="M6 6h5M8 8h3M6 11h5" stroke="#33a"/></svg><span class="lbl">P1</span></li>
<li><i class="g1 no-line"></i><i class="g2 end"></i><span style="width:15px" class="d-flex justify-content-center"><svg width="8" height="16"><use href="#bulb"/></svg></span><svg width="16" height="16"><use href="#op"/></svg><span class="picked">2D铣_COPY</span></li>
</ul>
<div class="d-flex align-items-center flex-shrink-0" style="height:16px;width:372px;background:#eee"><svg width="19" height="12"><path d="M11 2L7 6l4 4" fill="none" stroke="#333" stroke-width="2"/></svg><div class="thumb flex-grow-1 h-100 me-5"></div></div>
<div class="flex-shrink-0" style="height:6px;width:372px;margin-top:2px;background:#ddd;border-top:1px solid #aaa;border-bottom:1px solid #aaa"></div>
<div class="fold flex-shrink-0">相依性</div>
<div class="fold flex-shrink-0 d-flex justify-content-between mb-1">细节<svg width="12" height="12"><path d="M2 1l4 8 4-8" fill="none" stroke="#3a8296" stroke-width="2"/></svg></div>
</section>

<section class="scene flex-grow-1 position-relative overflow-hidden">
<svg viewBox="417 118 1503 901" preserveAspectRatio="xMinYMin slice">
<defs>
<linearGradient id="band"><stop offset="0" stop-color="#b4a70a"/><stop offset=".35" stop-color="#bba90a"/><stop offset="1" stop-color="#ae8d08"/></linearGradient>
<linearGradient id="cone" gradientUnits="userSpaceOnUse" x1="640" y1="160" x2="960" y2="478"><stop offset="0" stop-color="#777506"/><stop offset=".5" stop-color="#7d7606"/><stop offset=".85" stop-color="#7f7205"/><stop offset=".97" stop-color="#7a6604"/><stop offset="1" stop-color="#7b6804"/></linearGradient>
<linearGradient id="mid" gradientUnits="userSpaceOnUse" x1="500" y1="0" x2="735" y2="0"><stop offset="0" stop-color="#6f7004" stop-opacity="0"/><stop offset=".45" stop-color="#6f7004" stop-opacity=".8"/><stop offset=".65" stop-color="#6f7004" stop-opacity=".8"/><stop offset="1" stop-color="#6f7004" stop-opacity="0"/></linearGradient>
</defs>
<path d="M417 118h862v35H417z" fill="url(#band)"/>
<path d="M417 153h862L634 803 417 587z" fill="url(#cone)"/>
<path d="M500 153h235v548L634 803 500 670z" fill="url(#mid)"/>
<path d="M417 153.500h862" stroke="#5c5404"/>
<path d="M960 478h960v541H960z" fill="#f0ffff"/>
<path d="M942.500 118v373M508 542.500h386" stroke="#a6a3ac"/>
<path d="M894 542.500h16M942.500 491v19M942.500 574v445" stroke="#fff"/>
<path d="M978 542.500h942" stroke="#000"/>
<path d="M417 803h217" stroke="#9a8418" stroke-width="2"/>
<path d="M634 803h326" stroke="#2fa8a0" stroke-width="2"/>
<path d="M960 803h960" stroke="#94f0e8" stroke-width="2"/>
<circle cx="1142" cy="521" r="29" fill="#ebf900"/>
<path d="M978 542.500h193" stroke="#000"/>
<g transform="translate(840 380) scale(.3333)" fill="none" stroke="#dc0008" stroke-width="13" stroke-linejoin="round" stroke-linecap="round">
<path d="M975 84l-12 4-28 17-16 14-16 20 3 12-14 24-32 35 18 7-32 2 2 11-35 37-12 32-19 17-22 30-22 25-5 20-25 30-30 32-30 40-35 30-10 20-60 53-25 24-45 38-15 25-50 45-25 35-40 25-48 35h28v20l-25 23-42 25"/>
<path d="M100 541l70 3 60-10 125-9 5-11 70-6h70l70 6 45-4"/>
<path d="M415 475l-7 40-22 40 12 45 7 30 30 28 35 2"/>
<path d="M380 608l60-28 35-25 7-25 23-25"/>
<path d="M476 485l-4-30-12 0 40-20h20l10 20 35 25 3 35-33 57 25-2M540 570l14-32 14-22M610 505l2 20-52 50"/>
</g>
<path d="M617 803l14-2 26-9 23-2 18-3" fill="none" stroke="#dc0008" stroke-width="4" stroke-linecap="round"/>
<path d="M1143 522h6l20 18-1 5-4 2-20-20z" fill="#fff" stroke="#333"/><path d="M1143 522h7l-5 7z" fill="#000"/><path d="M1161 545l6-6M1148 530l14 13" stroke="#333"/>
</svg>
<div class="watermark position-absolute text-nowrap">UG编程免费资料领取Q群192963572</div>
</section>

<section class="dlg position-absolute">
<div class="dlg-head d-flex align-items-center"><svg width="16" height="16" viewBox="0 0 16 16"><circle cx="8" cy="8" r="5" fill="none" stroke="#fff" stroke-width="2"/><circle cx="8" cy="8" r="6.500" fill="none" stroke="#fff" stroke-width="2" stroke-dasharray="2.500 2.600"/><circle cx="8" cy="8" r="1.500" fill="#fff"/></svg><span style="padding-left:9px">刀轨可视化</span><button class="btn border-0 ms-auto" aria-label="关闭"><svg width="13" height="13"><path d="M1 1l11 11M12 1L1 12" stroke="#fff" stroke-width="2"/></svg></button></div>
<div class="dlg-body">
<div class="codes">
<div class="d-flex"><ul class="flex-grow-1" style="width:280px"><li>GOTO/30.172,7.661,30.000</li><li>GOTO/30.172,7.661,-1.500</li><li>CUTCOM/LEFT</li><li>GOTO/28.608,7.661,-1.500</li><li>CIRCLE/28.608,7.161,-1.500,0.0000000,0.0000000,</li><li>GOTO/28.108,7.161,-1.500</li></ul>
<div class="vbar d-flex flex-column"><svg width="15" height="17"><path d="M4 11l4-5 4 5" fill="none" stroke="#333" stroke-width="2"/></svg><div class="thumb"></div><svg class="mt-auto" width="15" height="17"><path d="M4 6l4 5 4-5" fill="none" stroke="#333" stroke-width="2"/></svg></div></div>
<div class="hbar d-flex align-items-center"><svg width="17" height="14"><path d="M11 3L7 7l4 4" fill="none" stroke="#333" stroke-width="2"/></svg><div class="thumb" style="width:132px;height:15px"></div><svg class="ms-auto" width="17" height="14"><path d="M6 3l4 4-4 4" fill="none" stroke="#333" stroke-width="2"/></svg></div>
</div>
<div style="padding:4px 0 0 10px">1</div>
<input class="slide" type="range" min="1" max="3" value="1" aria-label="运动位置">
<div class="ends d-flex justify-content-between"><span>1</span><span>3</span></div>
<div style="margin:6px 0 5px">进给率 (MMPM) 250.000000</div>
<div class="tabs d-flex align-items-end"><button class="btn chosen">重播</button><button class="btn" style="width:58px">3D 动态</button><button class="btn" style="width:60px">2D 动态</button><button class="btn" style="width:52px">静态</button></div>
<div class="panel">
<div>显示选项</div>
<div class="d-flex justify-content-between align-items-center" style="margin-top:4px"><label for="tl">刀具</label><span class="drop" style="width:51px"><select id="tl"><option>刀具</option></select></span></div>
<label class="tick" style="margin-top:5px"><input type="checkbox" disabled>2D 除料</label>
<label class="tick" style="margin-top:7px"><input type="checkbox" disabled>显示上一个 IPW</label>
<hr>
<div>运动显示</div>
<div class="d-flex justify-content-between align-items-center" style="margin-top:4px"><label for="tp">刀轨</label><span class="drop" style="width:135px"><select id="tp"><option>全部</option></select></span></div>
<div class="d-flex justify-content-between align-items-center" style="margin-top:2px"><label for="tt">刀具追踪</label><span class="drop" style="width:51px"><select id="tt"><option>刀尖</option></select></span></div>
<div class="d-flex justify-content-between align-items-center" style="margin-top:2px;color:#999"><label for="ct">运动数</label><input class="count" id="ct" type="text" value="10" disabled></div>
<label class="tick" style="margin-top:5px"><input type="checkbox" disabled>在每一层暂停</label>
<label class="tick" style="margin-top:7px"><input type="checkbox" disabled>显示刀具接触</label>
<hr style="margin:4px 0 3px">
<button class="btn wide-btn">过切和碰撞设置</button>
</div>
<div style="margin-top:5px">动画速度</div>
<div class="text-end" style="padding:6px 5px 0 0">10</div>
<input class="slide" type="range" min="1" max="10" value="10" aria-label="动画速度">
<div class="ends d-flex justify-content-between"><span>1</span><span>10</span></div>
<div class="play d-flex" style="gap:2px;margin:4px 0 12px 36px">
<button class="btn" aria-label="到开头"><svg width="22" height="16"><path d="M1 0v16" stroke="#225" stroke-width="2"/><path d="M12 1v14L4 8zM21 1v14l-8-7z" fill="#7a0004"/></svg></button>
<button class="btn" aria-label="上一步"><svg width="12" height="16"><path d="M1 0v16" stroke="#225" stroke-width="2"/><path d="M12 1v14L4 8z" fill="#7a0004"/></svg></button>
<button class="btn" aria-label="反向播放"><svg width="8" height="16"><path d="M8 1v14L0 8z" fill="#7a0004"/></svg></button>
<button class="btn" aria-label="播放"><svg width="8" height="16"><path d="M0 1v14l8-7z" fill="#7a0004"/></svg></button>
<button class="btn" aria-label="下一步"><svg width="12" height="16"><path d="M0 1v14l8-7z" fill="#7a0004"/><path d="M11 0v16" stroke="#225" stroke-width="2"/></svg></button>
<button class="btn" aria-label="到结尾"><svg width="22" height="16"><path d="M1 1v14l8-7zM10 1v14l8-7z" fill="#7a0004"/><path d="M21 0v16" stroke="#225" stroke-width="2"/></svg></button>
<button class="btn" aria-label="停止" style="border-color:#d8d8d8"><svg width="12" height="12"><path d="M0 0h12v12H0z" fill="#a08c92"/></svg></button>
</div>
<div class="d-flex justify-content-end" style="gap:5px;padding-right:6px"><button class="btn ok">确定</button><button class="btn cancel">取消</button></div>
</div>
</section>
</main>

<aside class="palette position-absolute">
<div class="palette-title d-flex align-items-center justify-content-between">电子教鞭<i></i></div>
<div class="palette-grid">
<button class="btn" aria-label="橡皮"><svg width="16" height="14"><path d="M1 9l6-8h7l-5 8v4H2zM1 9h8M9 9l5-8v4L9 13" fill="#fff" stroke="#222"/></svg></button>
<button class="btn" aria-label="吸管"><svg width="18" height="18"><path d="M4 13l8-9 2 2-8 9z" fill="#fff" stroke="#222"/><path d="M11 3l3-3 3 3-3 4z" fill="#222"/><path d="M1 16h9" stroke="#e00000" stroke-width="3"/></svg></button>
<button class="btn" aria-label="填充"><svg width="18" height="16"><path d="M6 6l6-5 5 7-6 6z" fill="#333"/><path d="M1 14V5q4-5 8-1l-1 3H5v6z" fill="#d00010"/><path d="M10 8l4-3" stroke="#fff"/></svg></button>
<button class="btn pressed" aria-label="画笔"><svg width="20" height="16"><path d="M0 3h6" stroke="#d00010" stroke-width="2"/><path d="M5 3l4 0 9 9-3 3-9-8z" fill="#fff" stroke="#222"/></svg></button>
<button class="btn" aria-label="直线"><svg width="14" height="14"><path d="M1 1l12 12" stroke="#c01030"/></svg></button>
<button class="btn" aria-label="箭头"><svg width="14" height="14"><path d="M1 1l12 12M1 6V1h5" fill="none" stroke="#c01030"/></svg></button>
<button class="btn" aria-label="矩形"><svg width="18" height="13"><path d="M1 1h16v11H1z" fill="none" stroke="#c01030"/></svg></button>
<button class="btn" aria-label="椭圆"><svg width="18" height="13"><ellipse cx="9" cy="6" rx="8" ry="5" fill="none" stroke="#c01030"/></svg></button>
<button class="btn" aria-label="实心矩形"><svg width="18" height="13"><path d="M0 0h17v12H0z" fill="#e60000"/></svg></button>
<button class="btn" aria-label="实心椭圆"><svg width="18" height="13"><ellipse cx="9" cy="6" rx="9" ry="6" fill="#e60000"/></svg></button>
<button class="btn fw-bold" aria-label="文字" style="color:#d00010;font-size:16px">A</button>
<button class="btn" aria-label="字体" style="color:#888">AA</button>
<button class="btn" aria-label="黑板"><svg width="18" height="18"><path d="M0 2h17v8H0z"/><path d="M0 10h17v7H0z" fill="#fff"/></svg></button>
<button class="btn" aria-label="清屏"><svg width="18" height="17"><path d="M1 1h16v11H1z" fill="#20e0e0" stroke="#055"/><path d="M5 3l8 7M13 3l-8 7" stroke="#b02020" stroke-width="2"/><path d="M6 13h6v2h2v2H4v-2h2z"/></svg></button>
<button class="btn" aria-label="放大"><svg width="16" height="16"><path d="M9 9l5 5" stroke="#222" stroke-width="3"/><circle cx="6" cy="6" r="5" fill="#10f0f0" stroke="#187878"/></svg></button>
<button class="btn" aria-label="保存"><svg width="14" height="14"><path d="M0 0h14v14H0z" fill="#111"/><path d="M3 1h8v6H3z" fill="#b8b860"/><path d="M3 9h6v4H3z" fill="#eee"/></svg></button>
<button class="btn" aria-label="打开"><svg width="16" height="14"><path d="M1 12V4h4l1 1h6v2" fill="#eec" stroke="#333"/><path d="M1 13l4-6h10l-4 6z" fill="#8a8a20" stroke="#333"/><path d="M9 2q3-2 5 1" fill="none" stroke="#222"/></svg></button>
<button class="btn" aria-label="菱形"><svg width="14" height="16"><path d="M2 6l5-5 5 5M2 9l5 5 5-5" fill="none" stroke="#d0606a"/></svg></button>
</div>
<div class="d-flex" style="padding:9px 3px 0;gap:4px">
<label class="bevel d-flex" style="width:38px"><select aria-label="线宽"><option>4</option></select><b class="d-flex align-items-center justify-content-center"><i class="caret"></i></b></label>
<label class="bevel d-flex" style="width:37px"><i class="swatch"></i><b class="d-flex align-items-center justify-content-center"><i class="caret"></i></b></label>
</div>
<div class="text-center" style="color:#c8101c;padding-top:7px">红烛软件</div>
</aside>

<footer class="flex-shrink-0 position-relative">
<div class="status d-flex align-items-center justify-content-between position-relative"><span class="msg">选择刀轨事件以定位刀具，或使用“播放”启动重播</span>
<svg width="17" height="16"><path d="M1 4V1h3M13 1h3v3M16 12v3h-3M4 15H1v-3" fill="none" stroke="#888"/><path d="M5 4h7v8H5z" fill="#9ab4d0" stroke="#345"/></svg>
<div class="ime position-absolute d-flex align-items-center">
<svg class="logo" width="29" height="28" viewBox="0 0 29 28"><path d="M1 5L23 0l4 22L6 28z" fill="#e04c20"/><path d="M20 8q-11-4-12 1 0 3 6 4 6 2 5 5-2 5-11 1" fill="none" stroke="#fff" stroke-width="4"/></svg>
<b style="font-size:14px">英</b>
<svg width="17" height="16" viewBox="0 0 17 16"><path d="M10 1q7 6 1 12-4 3-10 1 8-3 9-13z" fill="#2874b4"/></svg>
<svg width="16" height="16"><circle cx="4" cy="5" r="2" fill="#2874b4"/><path d="M9 8q3 3-1 6" stroke="#2874b4" stroke-width="2" fill="none"/></svg>
<svg width="17" height="14"><path d="M1 1h15v12H1z" fill="none" stroke="#2874b4" stroke-width="2"/><path d="M3 4h11M3 7h11M5 10h7" stroke="#2874b4" stroke-width="2"/><path d="M5 3v6M8 3v6M11 3v6" stroke="#fff"/></svg>
<svg width="15" height="16"><circle cx="7" cy="4" r="3" fill="#2874b4"/><path d="M1 15q0-8 6-8 5 0 6 8z" fill="#2874b4"/><path d="M8 8h6v8H8z" fill="#fff"/><path d="M9 10h4v5H9zM9 12h4" fill="none" stroke="#2874b4"/></svg>
<svg width="15" height="14"><path d="M4 1q3 3 7 0l4 3-2 3-2-1v8H4V6L2 7 0 4z" fill="#2874b4"/></svg>
<svg width="16" height="16"><path d="M2 14l8-8" stroke="#2874b4" stroke-width="3"/><path d="M13 1q-6-1-5 5 5 5 7-2l-3 1z" fill="#2874b4"/></svg>
</div></div>
<div class="task d-flex">
<div class="quick d-flex"><svg width="20" height="20"><path d="M0 2l8-1v9H0zM10 1l10-1v10H10z" fill="#fff"/></svg><svg width="20" height="20" style="margin-top:-4px"><path d="M2 0l8 12" stroke="#1a1ab0" stroke-width="4"/></svg><svg width="24" height="20"><path d="M0 3q6-6 24 0v9H0z" fill="#eee"/><path d="M8 3l4-3" stroke="#3a3" stroke-width="3"/></svg><svg width="22" height="20" style="margin-top:-2px"><path d="M0 0h22v12H0z" fill="#a8d8dc"/><circle cx="8" cy="6" r="3" fill="#7aa860"/><circle cx="15" cy="6" r="3" fill="#7aa860"/></svg><svg width="14" height="20" style="margin-top:-2px"><circle cx="7" cy="7" r="7"/><path d="M5 2v4M9 2v4" stroke="#ddd" stroke-width="2"/></svg></div>
<div class="win front"><svg width="22" height="16" style="margin-top:-4px"><path d="M0 0l8 6 4-4v9H3z" fill="#c83a6a"/><circle cx="16" cy="7" r="4" fill="#c8a840"/></svg></div>
<div class="win"><svg width="20" height="16" style="margin-top:-2px"><path d="M0 4l8-4 8 4v8H0z" fill="#7cc0e0"/></svg></div>
<div class="win"><svg width="20" height="20" style="margin-top:-6px"><circle cx="10" cy="11" r="10" fill="#eee"/></svg></div>
<div class="win"><svg width="14" height="20" style="margin-top:-5px"><circle cx="7" cy="8" r="7"/><circle cx="5" cy="5" r="2" fill="#ddd"/><circle cx="9" cy="5" r="2" fill="#ddd"/></svg></div>
<svg class="ms-auto me-4" width="200" height="14"><circle cx="3" cy="13" r="3" fill="#8cc0e0"/><circle cx="52" cy="14" r="4" fill="#2a4ac0"/><circle cx="75" cy="15" r="4"/><path d="M22 13h2M30 13h2M176 13h2M190 13h2M196 13h2M118 13h10" stroke="#aaa" stroke-width="2"/></svg>
<span class="clock">15:51</span>
</div>
</footer>
</body>
</html>
